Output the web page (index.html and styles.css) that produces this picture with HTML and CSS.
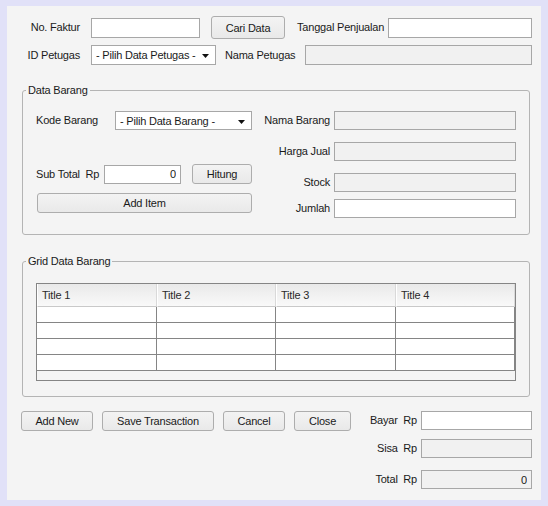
FILE: index.html
```html
<!DOCTYPE html>
<html>
<head>
<meta charset="utf-8">
<link rel="stylesheet" href="styles.css">
</head>
<body>
<div class="panel">
  <div class="row r1">
    <span class="lbl lab-a">No. Faktur</span>
    <input class="field w-faktur" type="text">
    <button class="btn btn-cari">Cari Data</button>
    <span class="lbl lab-tgl">Tanggal Penjualan</span>
    <input class="field grow" type="text">
  </div>
  <div class="row r2">
    <span class="lbl lab-a">ID Petugas</span>
    <div class="combo w-petugas"><span>- Pilih Data Petugas -</span><svg class="arrow" width="7" height="4" viewBox="0 0 7 4"><path d="M0 0H7L3.5 4Z" fill="#111"/></svg></div>
    <span class="lbl lab-nama">Nama Petugas</span>
    <input class="field dis grow" type="text" disabled>
  </div>

  <fieldset class="group g1">
    <legend>Data Barang</legend>
    <div class="g1-body">
      <div class="col-left">
        <div class="row">
          <span class="lbl lab-kode">Kode Barang</span>
          <div class="combo w-barang"><span>- Pilih Data Barang -</span><svg class="arrow" width="7" height="4" viewBox="0 0 7 4"><path d="M0 0H7L3.5 4Z" fill="#111"/></svg></div>
        </div>
        <div class="row r-sub">
          <span class="lbl lab-sub">Sub Total&nbsp; Rp</span>
          <input class="field num w-sub" type="text" value="0">
          <button class="btn btn-hitung">Hitung</button>
        </div>
        <button class="btn btn-add">Add Item</button>
      </div>
      <div class="col-right">
        <span class="lbl rl">Nama Barang</span><input class="field dis" type="text" disabled>
        <span class="lbl rl">Harga Jual</span><input class="field dis" type="text" disabled>
        <span class="lbl rl">Stock</span><input class="field dis" type="text" disabled>
        <span class="lbl rl">Jumlah</span><input class="field" type="text">
      </div>
    </div>
  </fieldset>

  <fieldset class="group g2">
    <legend>Grid Data Barang</legend>
    <div class="g2-body">
      <div class="table">
        <div class="thead">
          <div class="th">Title 1</div><div class="th">Title 2</div><div class="th">Title 3</div><div class="th">Title 4</div>
        </div>
        <div class="tbody">
          <div class="td"></div><div class="td"></div><div class="td"></div><div class="td"></div>
          <div class="td"></div><div class="td"></div><div class="td"></div><div class="td"></div>
          <div class="td"></div><div class="td"></div><div class="td"></div><div class="td"></div>
          <div class="td"></div><div class="td"></div><div class="td"></div><div class="td"></div>
        </div>
      </div>
    </div>
  </fieldset>

  <div class="bottom">
    <div class="buttons">
      <button class="btn b-new">Add New</button>
      <button class="btn b-save">Save Transaction</button>
      <button class="btn b-cancel">Cancel</button>
      <button class="btn b-close">Close</button>
    </div>
    <div class="pay">
      <span class="lbl pl">Bayar&nbsp; Rp</span><input class="field" type="text">
      <span class="lbl pl">Sisa&nbsp; Rp</span><input class="field dis" type="text" disabled>
      <span class="lbl pl">Total&nbsp; Rp</span><input class="field dis num" type="text" value="0" disabled>
    </div>
  </div>
</div>
</body>
</html>
```

FILE: styles.css
```css
html, body {
  margin: 0;
  padding: 0;
}
body {
  background: #e1e1f8;
  width: 548px;
  height: 506px;
  overflow: hidden;
  font-family: "Liberation Sans", Arial, sans-serif;
  font-size: 11px;
  letter-spacing: -0.2px;
  color: #1a1a1a;
}
.panel {
  margin: 6px 0 0 7px;
  width: 534px;
  height: 494px;
  box-sizing: border-box;
  background: #f4f4f4;
  padding: 10px 9px 0 0;
}
.row {
  display: flex;
  align-items: center;
}
.lbl {
  white-space: nowrap;
  line-height: 13px;
}
.field {
  box-sizing: border-box;
  height: 20px;
  margin: 0;
  padding: 0 4px;
  border: 1px solid #a7a7a7;
  background: #fff;
  font: inherit;
  letter-spacing: inherit;
  color: #1a1a1a;
  outline: none;
}
.field.dis {
  background: #f1f1f1;
}
.field.num {
  text-align: right;
}
.grow {
  flex: 1;
  min-width: 0;
}
.btn {
  box-sizing: border-box;
  height: 20px;
  margin: 0;
  padding: 0;
  border: 1px solid #adadad;
  border-radius: 3px;
  background: linear-gradient(#f3f3f3, #e9e9e9);
  font: inherit;
  letter-spacing: inherit;
  color: #1a1a1a;
}
.combo {
  box-sizing: border-box;
  height: 20px;
  border: 1px solid #a7a7a7;
  background: #fff;
  display: flex;
  align-items: center;
  padding: 0 6px 0 4px;
}
.combo span {
  flex: 1;
  min-width: 0;
  overflow: hidden;
  white-space: nowrap;
}
.arrow {
  display: block;
  flex: none;
  margin-top: 2px;
}

/* top rows */
.r1 {
  height: 23px;
}
.lab-a {
  width: 73px;
  text-align: right;
}
.w-faktur {
  width: 109px;
  margin-left: 11px;
}
.btn-cari {
  width: 74px;
  height: 23px;
  margin-left: 11px;
}
.lab-tgl {
  margin-left: 12px;
  margin-right: 4px;
}
.r2 {
  margin-top: 6px;
  height: 20px;
}
.w-petugas {
  width: 125px;
  margin-left: 11px;
}
.lab-nama {
  margin-left: 9px;
  margin-right: 10px;
}

/* group boxes */
.group {
  margin: 0 2px 0 15px;
  padding: 0;
  border: 1px solid #b4b4b4;
  border-radius: 3px;
  min-width: 0;
}
.group legend {
  margin-left: 3px;
  padding: 0 2px;
  line-height: 14px;
}
.g1 {
  margin-top: 18px;
}
.g1-body {
  display: grid;
  grid-template-columns: 217px 1fr;
  padding: 14px 13px 16px 13px;
}
.col-left {
  display: flex;
  flex-direction: column;
  align-items: flex-start;
}
.lab-kode {
  width: 79px;
}
.w-barang {
  width: 137px;
  height: 19px;
}
.r-sub {
  margin-top: 34px;
}
.lab-sub {
  width: 68px;
}
.w-sub {
  width: 77px;
  height: 19px;
}
.btn-hitung {
  width: 60px;
  margin-left: 11px;
}
.btn-add {
  width: 215px;
  margin: 9px 0 0 1px;
}
.col-right {
  display: grid;
  grid-template-columns: 77px 182px;
  grid-template-rows: 31px 31px 26px 19px;
  column-gap: 4px;
  align-items: start;
}
.col-right .field {
  height: 19px;
}
.rl {
  text-align: right;
  line-height: 19px;
}

.g2 {
  margin-top: 19px;
}
.g2-body {
  padding: 15px 13px 15px 13px;
}
.table {
  box-sizing: border-box;
  height: 98px;
  border: 1px solid #858585;
  background: #f4f4f4;
}
.thead, .tbody {
  display: grid;
  grid-template-columns: 120px 119px 120px 119px;
}
.th {
  box-sizing: border-box;
  height: 23px;
  padding: 5px 0 0 4px;
  background: linear-gradient(#e9e9e9, #f9f9f9);
  border-right: 1px solid #d9d9d9;
  border-left: 1px solid #fff;
  border-bottom: 1px solid #c9c9c9;
  line-height: 13px;
  color: #2a2a2a;
}
.td {
  box-sizing: border-box;
  height: 16px;
  background: #fff;
  border-right: 1px solid #858585;
  border-bottom: 1px solid #858585;
}

/* bottom */
.bottom {
  display: flex;
  justify-content: space-between;
  align-items: flex-start;
  margin: 14px 0 0 14px;
}
.buttons {
  display: flex;
  gap: 9px;
}
.b-new { width: 72px; }
.b-save { width: 112px; }
.b-cancel { width: 62px; }
.b-close { width: 57px; }
.pay {
  display: grid;
  grid-template-columns: auto 111px;
  grid-template-rows: 28px 31px 19px;
  column-gap: 4px;
  align-items: start;
}
.pay .field {
  height: 19px;
}
.pl {
  text-align: right;
  line-height: 19px;
}
```
